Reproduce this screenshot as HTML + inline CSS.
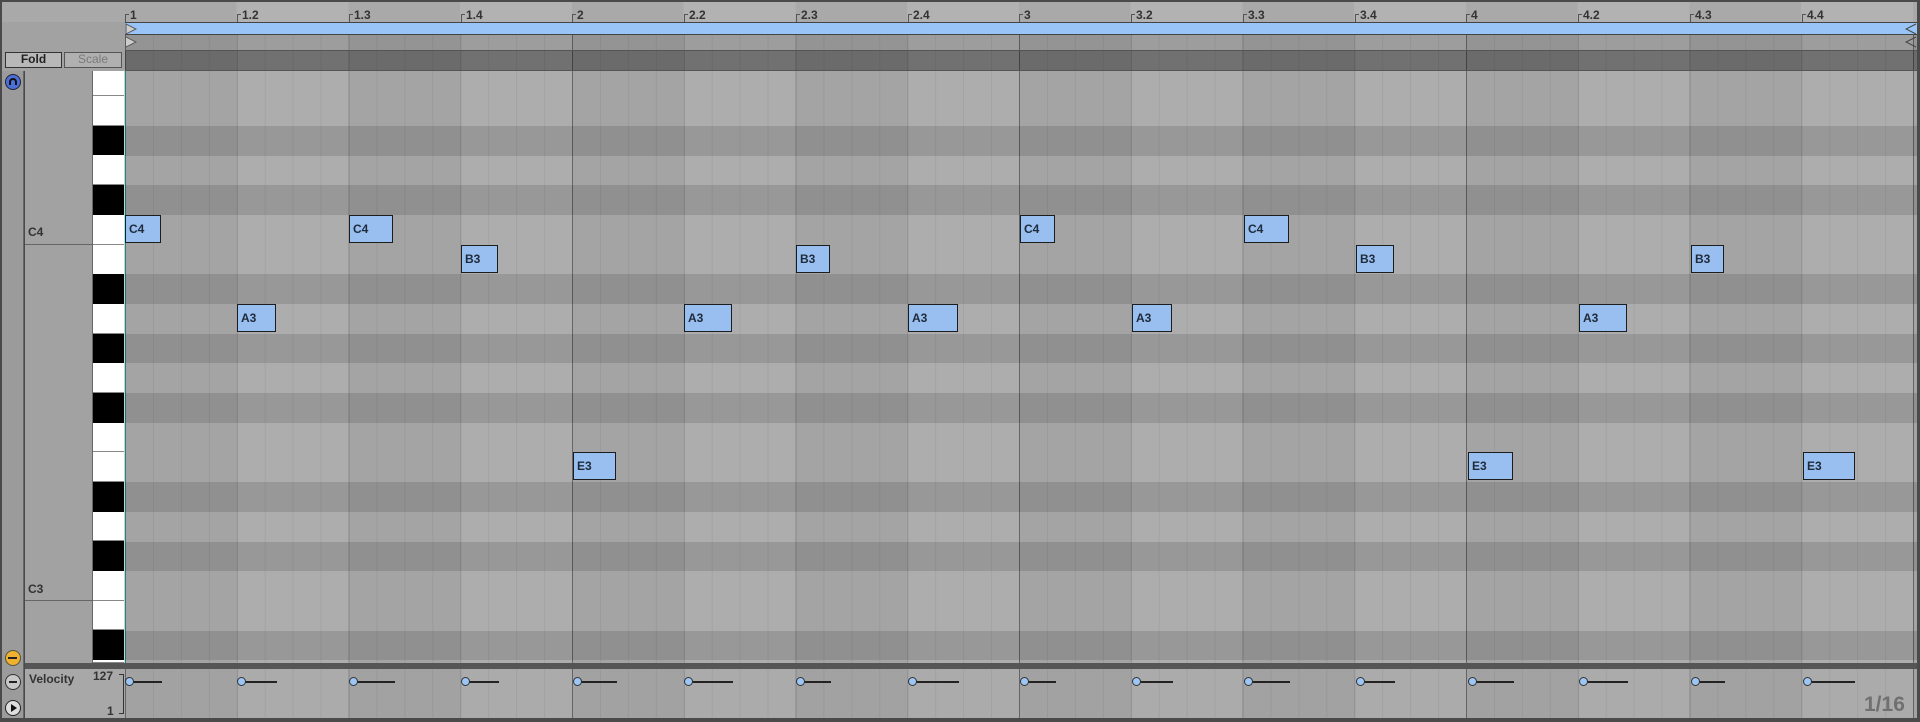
<!DOCTYPE html><html><head><meta charset="utf-8"><style>
*{margin:0;padding:0;box-sizing:border-box}
body{width:1920px;height:722px;background:#4a4a4a;position:relative;overflow:hidden;font-family:"Liberation Sans",sans-serif}
.a{position:absolute}
.grid{left:125px;width:1792px;background:#adadad;
background-image:
linear-gradient(90deg,rgba(0,0,0,.25) 1px,transparent 1px),
linear-gradient(90deg,rgba(0,0,0,.12) 1px,transparent 1px),
linear-gradient(90deg,rgba(0,0,0,.06) 1px,transparent 1px),
linear-gradient(90deg,rgba(0,0,0,.055) 111.75px,transparent 111.75px);
background-size:447px 100%,111.75px 100%,27.94px 100%,223.5px 100%;}
.br{left:125px;width:1792px;background:rgba(0,0,0,.12)}
.n{position:absolute;height:28px;background:#98bff0;border:1.5px solid #1c1c1c;font-size:12px;font-weight:bold;color:#1f2a3a;padding:6px 0 0 3px}
.k{position:absolute;left:93px;width:31px;background:#fff;border-bottom:1px solid #888}
.kb{background:#000;border:none}
.rl{position:absolute;top:9px;font-size:12px;font-weight:bold;color:#333;padding-left:5px;line-height:12px}
.rl:before{content:"";position:absolute;left:0;top:5px;width:3px;height:8px;border-left:1px solid #555;border-top:1px solid #555}
.v{position:absolute;top:681px;height:1.5px;background:#222}
.vd{position:absolute;top:677px;width:9px;height:9px;border-radius:50%;background:#9cc6f5;border:1.5px solid #333}
</style></head><body>
<div class="a" style="left:2px;top:2px;width:1915px;height:20px;background:#a9a9a9"></div>
<div class="a" style="left:125px;top:2px;width:1792px;height:20px;background-image:linear-gradient(90deg,#a9a9a9 111.75px,#b2b2b2 111.75px);background-size:223.5px 100%"></div>
<div class="rl" style="left:125px">1</div><div class="rl" style="left:237px">1.2</div><div class="rl" style="left:349px">1.3</div><div class="rl" style="left:461px">1.4</div>
<div class="rl" style="left:572px">2</div><div class="rl" style="left:684px">2.2</div><div class="rl" style="left:796px">2.3</div><div class="rl" style="left:908px">2.4</div>
<div class="rl" style="left:1019px">3</div><div class="rl" style="left:1131px">3.2</div><div class="rl" style="left:1243px">3.3</div><div class="rl" style="left:1355px">3.4</div>
<div class="rl" style="left:1466px">4</div><div class="rl" style="left:1578px">4.2</div><div class="rl" style="left:1690px">4.3</div><div class="rl" style="left:1802px">4.4</div>
<div class="a" style="left:2px;top:22px;width:123px;height:49px;background:#a2a2a2"></div>
<div class="a" style="left:5px;top:52px;width:57px;height:16px;border:1.5px solid #333;background:#b8b8b8;font-size:12px;font-weight:bold;color:#222;text-align:center;line-height:13px">Fold</div>
<div class="a" style="left:64px;top:52px;width:58px;height:16px;border:1.5px solid #555;background:#b0b0b0;font-size:12px;color:#7a7a7a;text-align:center;line-height:13px">Scale</div>
<div class="a" style="left:125px;top:22px;width:1792px;height:13px;background:#98c4f8;border-top:1px solid #444;border-bottom:1px solid #444"></div>
<div class="grid a" style="top:35px;height:15px;background-color:#9d9d9d"></div>
<div class="grid a" style="top:50px;height:21px;background-color:#717171;border-top:1px solid #555;border-bottom:1px solid #555"></div>
<svg class="a" style="left:125px;top:23px" width="12" height="28"><path d="M1 1 L11 6 L1 11 Z M1 14 L11 19 L1 24" fill="#ccc" stroke="#555" stroke-width="1"/></svg>
<svg class="a" style="left:1904px;top:23px" width="13" height="28"><path d="M12 1 L2 6 L12 11 M12 14 L2 19 L12 24" fill="none" stroke="#444" stroke-width="1"/></svg>
<div class="a" style="left:2px;top:71px;width:22px;height:647px;background:#9b9b9b;border-right:1px solid #666"></div>
<div class="a" style="left:25px;top:71px;width:68px;height:592px;background:#a2a2a2;border-right:1px solid #666"></div>
<div class="a" style="left:25px;top:244px;width:68px;height:1px;background:#666"></div>
<div class="a" style="left:25px;top:600px;width:68px;height:1px;background:#666"></div>
<div class="a" style="left:28px;top:225px;font-size:12px;font-weight:bold;color:#333">C4</div>
<div class="a" style="left:28px;top:582px;font-size:12px;font-weight:bold;color:#333">C3</div>
<div class="a" style="left:5px;top:74px;width:16px;height:16px;border-radius:50%;background:#4a6fd8;border:1px solid #223"></div>
<div class="a" style="left:9px;top:78px;width:8px;height:7px;border:2px solid #111;border-bottom:none;border-radius:4px 4px 0 0"></div>
<div class="a" style="left:5px;top:650px;width:16px;height:16px;border-radius:50%;background:#f0b030;border:1px solid #553"></div>
<div class="a" style="left:8px;top:657px;width:9px;height:2px;background:#222"></div>
<div class="a" style="left:5px;top:674px;width:16px;height:16px;border-radius:50%;background:#c8c8c8;border:1px solid #333"></div>
<div class="a" style="left:9px;top:681px;width:8px;height:2px;background:#222"></div>
<div class="a" style="left:5px;top:700px;width:16px;height:16px;border-radius:50%;background:#ddd;border:1px solid #222"></div>
<svg class="a" style="left:5px;top:700px" width="16" height="16"><path d="M6 4 L12 8 L6 12 Z" fill="#111"/></svg>
<div class="k" style="top:71px;height:25px"></div>
<div class="k" style="top:96px;height:30px"></div>
<div class="k kb" style="top:126px;height:29px"></div>
<div class="k" style="top:155px;height:30px"></div>
<div class="k kb" style="top:185px;height:30px"></div>
<div class="k" style="top:215px;height:29.5px"></div>
<div class="k" style="top:244.5px;height:30px"></div>
<div class="k kb" style="top:274px;height:30px"></div>
<div class="k" style="top:304px;height:30px"></div>
<div class="k kb" style="top:333.6px;height:30px"></div>
<div class="k" style="top:363.3px;height:29.7px"></div>
<div class="k kb" style="top:393px;height:29.7px"></div>
<div class="k" style="top:422.7px;height:29.7px"></div>
<div class="k" style="top:452.4px;height:29.7px"></div>
<div class="k kb" style="top:482px;height:29.7px"></div>
<div class="k" style="top:511.8px;height:29.7px"></div>
<div class="k kb" style="top:541px;height:29.7px"></div>
<div class="k" style="top:571px;height:29.7px"></div>
<div class="k" style="top:600.5px;height:29.7px"></div>
<div class="k kb" style="top:630.3px;height:29.5px"></div>
<div class="k" style="top:659.8px;height:3.2px"></div>
<div class="grid a" style="top:71px;height:592px"></div>
<div class="br a" style="top:126px;height:29.7px"></div>
<div class="br a" style="top:185px;height:29.7px"></div>
<div class="br a" style="top:274.2px;height:29.7px"></div>
<div class="br a" style="top:333.6px;height:29.7px"></div>
<div class="br a" style="top:393px;height:29.7px"></div>
<div class="br a" style="top:482px;height:29.7px"></div>
<div class="br a" style="top:541.5px;height:29.7px"></div>
<div class="br a" style="top:630.6px;height:29.7px"></div>
<div class="a" style="left:124px;top:71px;width:1px;height:647px;background:#8ee"></div>
<div class="n" style="left:125px;top:215px;width:36px">C4</div>
<div class="n" style="left:237px;top:304px;width:39px">A3</div>
<div class="n" style="left:349px;top:215px;width:44px">C4</div>
<div class="n" style="left:461px;top:245px;width:37px">B3</div>
<div class="n" style="left:573px;top:452px;width:43px">E3</div>
<div class="n" style="left:684px;top:304px;width:48px">A3</div>
<div class="n" style="left:796px;top:245px;width:34px">B3</div>
<div class="n" style="left:908px;top:304px;width:50px">A3</div>
<div class="n" style="left:1020px;top:215px;width:35px">C4</div>
<div class="n" style="left:1132px;top:304px;width:40px">A3</div>
<div class="n" style="left:1244px;top:215px;width:45px">C4</div>
<div class="n" style="left:1356px;top:245px;width:38px">B3</div>
<div class="n" style="left:1468px;top:452px;width:45px">E3</div>
<div class="n" style="left:1579px;top:304px;width:48px">A3</div>
<div class="n" style="left:1691px;top:245px;width:33px">B3</div>
<div class="n" style="left:1803px;top:452px;width:52px">E3</div>
<div class="a" style="left:25px;top:663px;width:1892px;height:6px;background:#555"></div>
<div class="a" style="left:25px;top:669px;width:100px;height:49px;background:#a8a8a8"></div>
<div class="grid a" style="top:669px;height:49px;background-color:#ababab"></div>
<div class="a" style="left:29px;top:672px;font-size:12px;font-weight:bold;color:#333">Velocity</div>
<div class="a" style="left:93px;top:669px;font-size:12px;font-weight:bold;color:#333">127</div>
<div class="a" style="left:107px;top:704px;font-size:12px;font-weight:bold;color:#333">1</div>
<div class="a" style="left:119px;top:674px;width:5px;height:40px;border:1.5px solid #333;border-left:none"></div>
<div class="a" style="left:1864px;top:693px;font-size:21px;font-weight:bold;color:#707070">1/16</div>
<div class="v" style="left:129px;width:33px"></div><div class="vd" style="left:125px"></div>
<div class="v" style="left:241px;width:36px"></div><div class="vd" style="left:237px"></div>
<div class="v" style="left:353px;width:42px"></div><div class="vd" style="left:349px"></div>
<div class="v" style="left:465px;width:34px"></div><div class="vd" style="left:461px"></div>
<div class="v" style="left:577px;width:40px"></div><div class="vd" style="left:573px"></div>
<div class="v" style="left:688px;width:45px"></div><div class="vd" style="left:684px"></div>
<div class="v" style="left:800px;width:31px"></div><div class="vd" style="left:796px"></div>
<div class="v" style="left:912px;width:47px"></div><div class="vd" style="left:908px"></div>
<div class="v" style="left:1024px;width:32px"></div><div class="vd" style="left:1020px"></div>
<div class="v" style="left:1136px;width:37px"></div><div class="vd" style="left:1132px"></div>
<div class="v" style="left:1248px;width:42px"></div><div class="vd" style="left:1244px"></div>
<div class="v" style="left:1360px;width:35px"></div><div class="vd" style="left:1356px"></div>
<div class="v" style="left:1472px;width:42px"></div><div class="vd" style="left:1468px"></div>
<div class="v" style="left:1583px;width:45px"></div><div class="vd" style="left:1579px"></div>
<div class="v" style="left:1695px;width:30px"></div><div class="vd" style="left:1691px"></div>
<div class="v" style="left:1807px;width:48px"></div><div class="vd" style="left:1803px"></div>
</body></html>
